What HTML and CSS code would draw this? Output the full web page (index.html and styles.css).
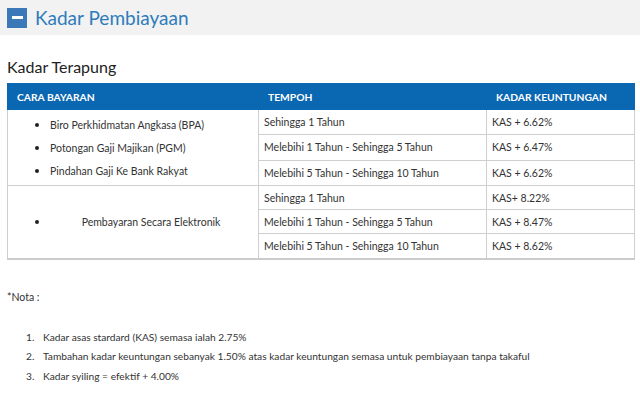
FILE: index.html
```html
<!DOCTYPE html>
<html lang="ms">
<head>
<meta charset="utf-8">
<title>Kadar Pembiayaan</title>
<link rel="stylesheet" href="styles.css">
</head>
<body>
<div class="panel-head">
  <span class="toggle"><span class="bar"></span></span>
  <h1 class="title">Kadar Pembiayaan</h1>
</div>
<div class="content">
  <h2 class="subtitle">Kadar Terapung</h2>
  <table class="rates">
    <thead>
      <tr>
        <th class="c1">CARA BAYARAN</th>
        <th class="c2">TEMPOH</th>
        <th class="c3">KADAR KEUNTUNGAN</th>
      </tr>
    </thead>
    <tbody>
      <tr class="r-a">
        <td rowspan="3" class="methods">
          <ul class="mlist">
            <li>Biro Perkhidmatan Angkasa (BPA)</li>
            <li>Potongan Gaji Majikan (PGM)</li>
            <li>Pindahan Gaji Ke Bank Rakyat</li>
          </ul>
        </td>
        <td>Sehingga 1 Tahun</td>
        <td>KAS + 6.62%</td>
      </tr>
      <tr class="r-a"><td>Melebihi 1 Tahun - Sehingga 5 Tahun</td><td>KAS + 6.47%</td></tr>
      <tr class="r-a"><td>Melebihi 5 Tahun - Sehingga 10 Tahun</td><td>KAS + 6.62%</td></tr>
      <tr class="r-b">
        <td rowspan="3" class="methods">
          <ul class="mlist center">
            <li>Pembayaran Secara Elektronik</li>
          </ul>
        </td>
        <td>Sehingga 1 Tahun</td>
        <td>KAS+ 8.22%</td>
      </tr>
      <tr class="r-b"><td>Melebihi 1 Tahun - Sehingga 5 Tahun</td><td>KAS + 8.47%</td></tr>
      <tr class="r-b"><td>Melebihi 5 Tahun - Sehingga 10 Tahun</td><td>KAS + 8.62%</td></tr>
    </tbody>
  </table>
  <p class="nota">*Nota :</p>
  <ol class="notes">
    <li>Kadar asas stardard (KAS) semasa ialah 2.75%</li>
    <li>Tambahan kadar keuntungan sebanyak 1.50% atas kadar keuntungan semasa untuk pembiayaan tanpa takaful</li>
    <li>Kadar syiling = efektif + 4.00%</li>
  </ol>
</div>
</body>
</html>
```
FILE: styles.css
```css
html, body {
  margin: 0;
  padding: 0;
  background: #ffffff;
  font-family: Lato, "Liberation Sans", sans-serif;
  color: #333333;
}

.panel-head {
  height: 35px;
  background: #f2f2f2;
  display: flex;
  align-items: center;
  padding-left: 7px;
  gap: 8px;
}

.toggle {
  width: 20px;
  height: 20px;
  background: #3a78b7;
  display: flex;
  align-items: center;
  justify-content: center;
}

.toggle .bar {
  width: 11px;
  height: 3px;
  background: #ffffff;
}

.title {
  margin: 0;
  font-weight: normal;
  font-size: 19px;
  color: #2e7cbb;
  line-height: 1;
}

.content {
  padding: 0 6px 0 7px;
}

.subtitle {
  margin: 15px 0 0 0;
  font-weight: normal;
  font-size: 16px;
  line-height: 33px;
  color: #222222;
}

.rates {
  width: 628px;
  border-collapse: collapse;
  font-size: 10.5px;
  color: #333333;
  border: 1px solid #cccccc;
  border-bottom-width: 2px;
}

.rates th {
  background: #0a67b2;
  color: #ffffff;
  text-align: left;
  font-size: 10.3px;
  font-weight: bold;
  height: 25px;
  padding: 0 9px;
  border: 1px solid #0a67b2;
}

.rates .c1 { width: 232px; }
.rates .c2 { width: 209px; }

.rates td {
  border: 1px solid #cfcfcf;
  padding: 0 5px;
  vertical-align: middle;
}

.r-a td { height: 24.3px; }
.r-b td { height: 23.3px; }

.rates td.methods {
  padding: 0;
}

.mlist {
  margin: 0;
  padding: 0 6px 0 42px;
}

.mlist li {
  line-height: 22px;
}

.mlist li::marker {
  font-size: 13px;
  color: #222222;
}

.mlist.center li {
  text-align: center;
}

.nota {
  margin: 30px 0 0 0;
  font-size: 10.5px;
  line-height: 14px;
}

.notes {
  margin: 24px 0 0 0;
  padding-left: 30px;
  font-size: 10.2px;
}

.notes li {
  line-height: 19.6px;
  padding-left: 6px;
}
```
